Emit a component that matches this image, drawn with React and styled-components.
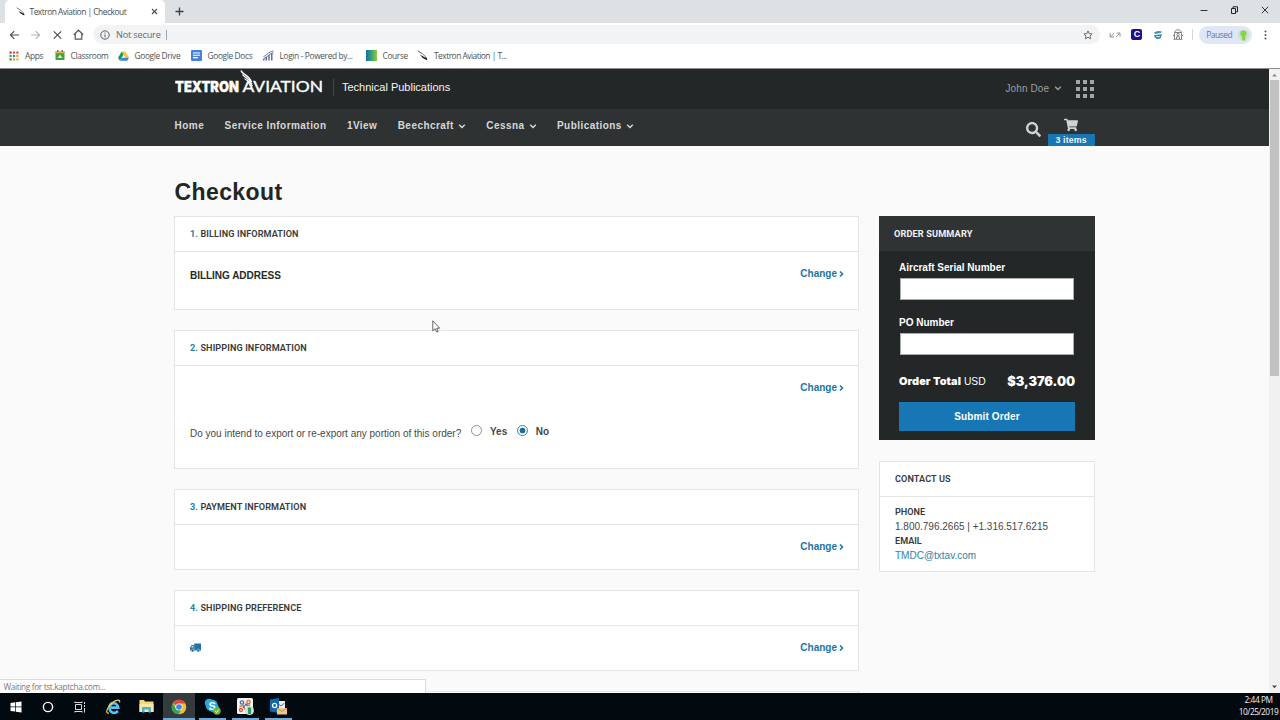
import React from "react";
import styled, { createGlobalStyle } from "styled-components";
import { FaSearch, FaShoppingCart } from "react-icons/fa";

const GlobalStyle = createGlobalStyle`
  * {
    box-sizing: border-box;
  }
  body {
    margin: 0;
    overflow: hidden;
  }
  svg {
    display: block;
    flex-shrink: 0;
  }
`;

const siteFont = `"Liberation Sans", Arial, sans-serif`;
const headingFont = `Roboto, "Liberation Sans", sans-serif`;
const uiFont = `"Open Sans", "Noto Sans", sans-serif`;

const Desktop = styled.div`
  position: relative;
  display: flex;
  flex-direction: column;
  width: 1280px;
  height: 720px;
  overflow: hidden;
  font-family: ${siteFont};
  background: #fafafa;
`;

/* ---------- browser ---------- */

const TabStrip = styled.div`
  display: flex;
  align-items: center;
  height: 23px;
  padding-left: 5px;
  background: #dee1e4;
  font-family: ${uiFont};
`;

const Tab = styled.div`
  display: flex;
  align-items: center;
  align-self: stretch;
  width: 160px;
  padding: 0 7px 0 11px;
  border-radius: 5px 5px 0 0;
  background: #fff;
`;

const TabTitle = styled.span`
  flex: 1;
  margin: -1px 0 0 4.5px;
  font-size: 8.4px;
  letter-spacing: -0.48px;
  white-space: nowrap;
  color: #4b4e51;
`;

const NewTab = styled.div`
  flex: 1;
  margin-left: 10px;
`;

const WindowButtons = styled.div`
  display: flex;
  align-items: center;
  gap: 22px;
  height: 19px;
  padding-right: 11px;
  align-self: flex-start;
`;

const Toolbar = styled.div`
  display: flex;
  align-items: center;
  height: 23px;
  padding: 0 9px;
  background: #fff;
  font-family: ${uiFont};
`;

const NavIcons = styled.div`
  display: flex;
  align-items: center;
  gap: 10.4px;
  width: 84px;
`;

const Omnibox = styled.div`
  display: flex;
  align-items: center;
  width: 1007px;
  height: 19px;
  padding: 0 7px;
  border-radius: 10px;
  background: #f1f3f4;
`;

const UrlText = styled.span`
  flex: 1;
  display: flex;
  align-items: center;
  gap: 5px;
  margin-left: 6px;
  font-size: 9.2px;
  letter-spacing: -0.2px;
  line-height: 12px;
  color: #66696c;
  &::after {
    content: "";
    width: 1px;
    height: 10px;
    background: #a5a8ab;
  }
`;

const Extensions = styled.div`
  display: flex;
  align-items: center;
  gap: 10.4px;
  margin-left: 9px;
`;

const CBadge = styled.span`
  width: 11px;
  height: 11px;
  border-radius: 2px;
  background: #21108c;
  color: #fff;
  font: bold 9px/11px ${siteFont};
  text-align: center;
`;

const Divider = styled.span`
  width: 1px;
  height: 11px;
  margin: 0 6px 0 9px;
  background: #d4d6d8;
`;

const Profile = styled.div`
  display: flex;
  align-items: center;
  justify-content: space-between;
  width: 53px;
  height: 18px;
  padding: 0 3px 0 7px;
  margin-right: 12px;
  border-radius: 9px;
  background: #dfe7f5;
  color: #5676c0;
  font-size: 8.4px;
  letter-spacing: -0.45px;
`;

const Bookmarks = styled.div`
  display: flex;
  align-items: center;
  height: 23px;
  padding: 0 0 3px 9px;
  border-bottom: 1px solid #8a8c8e;
  background: #fff;
  font-family: ${uiFont};
`;

const Bookmark = styled.div`
  display: flex;
  align-items: center;
  gap: 6px;
  width: ${(p) => p.$width}px;
  font-size: 8.4px;
  letter-spacing: ${(p) => p.$spacing || -0.37}px;
  white-space: nowrap;
  color: #505356;
`;

/* ---------- site ---------- */

const Viewport = styled.div`
  display: flex;
  height: 624px;
  overflow: hidden;
`;

const Site = styled.div`
  flex: 1;
  height: 624px;
  overflow: hidden;
`;

const Band = styled.div`
  height: ${(p) => p.$height}px;
  padding-left: 174.6px;
  background: ${(p) => p.$color};
`;

const BandInner = styled.div`
  display: flex;
  width: 920px;
  height: 100%;
`;

const Brand = styled.div`
  display: flex;
  flex: 1;
`;

const SiteName = styled.span`
  height: 17px;
  margin: 10px 0 0 9.4px;
  padding-left: 8px;
  border-left: 1px solid #44494a;
  font-size: 11px;
  line-height: 17px;
  color: #f4f5f5;
`;

const User = styled.div`
  display: flex;
  align-items: center;
  gap: 4.5px;
  height: 38px;
  margin-right: 14px;
  font-size: 10px;
  letter-spacing: 0.1px;
  color: #9b9fa0;
`;

const GridDots = styled.div`
  display: grid;
  grid-template-columns: repeat(3, 4px);
  grid-auto-rows: 4px;
  gap: 3px;
  align-self: center;
  margin-right: 1px;
  span {
    background: #a2a5a6;
  }
`;

const MainNav = styled.nav`
  display: flex;
  flex: 1;
  gap: 20.4px;
  font-size: 10px;
  font-weight: bold;
  letter-spacing: 0.45px;
  color: #d5d8d8;
`;

const NavItem = styled.span`
  display: flex;
  align-items: center;
  height: 33px;
  gap: 4px;
`;

const SearchButton = styled.div`
  margin: 12.5px 7px 0 0;
`;

const Cart = styled.div`
  display: flex;
  flex-direction: column;
  align-items: center;
  justify-content: flex-end;
  gap: 2px;
  width: 47px;
`;

const CartCount = styled.span`
  width: 100%;
  height: 12px;
  background: #1777b4;
  color: #e9f3f9;
  font-size: 8.8px;
  font-weight: bold;
  line-height: 12px;
  letter-spacing: 0.15px;
  text-align: center;
`;

const Content = styled.main`
  display: flex;
  gap: 20px;
  width: 921px;
  margin-left: 174px;
`;

const Title = styled.h1`
  height: 70px;
  margin: 0 0 0 174.5px;
  padding-top: 31px;
  font-size: 23px;
  line-height: 30px;
  letter-spacing: 0.4px;
  color: #202526;
`;

const Steps = styled.div`
  display: flex;
  flex-direction: column;
  gap: 20px;
  width: 685px;
`;

const Card = styled.section`
  height: ${(p) => p.$height}px;
  border: 1px solid #e4e5e5;
  background: #fff;
`;

const CardHeader = styled.h2`
  height: 35px;
  margin: 0;
  padding-left: 15px;
  border-bottom: 1px solid #e4e5e5;
  font-family: ${headingFont};
  font-size: 9.1px;
  font-weight: 600;
  line-height: 35px;
  letter-spacing: 0.1px;
  color: #35393a;
  b {
    font-weight: 700;
    color: #2780ac;
  }
`;

const CardBody = styled.div`
  display: flex;
  justify-content: space-between;
  padding: 14px 14px 0 15px;
`;

const Address = styled.h3`
  margin: 2px 0 0;
  font-size: 10px;
  line-height: 15px;
  letter-spacing: -0.03px;
  color: #25292a;
`;

const ChangeLink = styled.a`
  display: flex;
  align-items: center;
  gap: 2px;
  height: 15px;
  margin-left: auto;
  color: #1e74a6;
  font-size: 10px;
  font-weight: bold;
`;

const ExportRow = styled.div`
  display: flex;
  align-items: center;
  margin: 28px 0 0 15px;
  height: 16px;
  font-size: 10px;
  color: #46494a;
`;

const Question = styled.span`
  width: 281px;
  padding-top: 5px;
  white-space: nowrap;
`;

const Radio = styled.span`
  width: 11px;
  height: 11px;
  margin: 0 8px 2px 0;
  border: 1px solid ${(p) => (p.$checked ? "#2a86b8" : "#8d9091")};
  border-radius: 50%;
  background: ${(p) => (p.$checked ? "radial-gradient(#1b6c9c 0 2.6px, #fff 3.2px)" : "#fff")};
`;

const RadioLabel = styled.b`
  margin-right: 9.5px;
`;

const Sidebar = styled.aside`
  display: flex;
  flex-direction: column;
  gap: 21px;
  width: 216px;
`;

const Summary = styled.section`
  height: 224px;
  background: #232728;
  color: #fff;
`;

const SummaryHeader = styled.h2`
  height: 35px;
  margin: 0;
  padding-left: 15px;
  background: #2f3334;
  font-family: ${headingFont};
  font-size: 9.2px;
  font-weight: 700;
  line-height: 35px;
  letter-spacing: 0.12px;
  color: #f1f2f2;
`;

const Field = styled.label`
  display: block;
  height: 55px;
  padding: 9px 20px 0;
  font-size: 10px;
  font-weight: bold;
  line-height: 15px;
`;

const Input = styled.input`
  display: block;
  width: 174px;
  height: 22px;
  margin: 3px 0 0 1px;
  border: 1px solid #a9adae;
  background: #fff;
`;

const Total = styled.div`
  display: flex;
  align-items: center;
  justify-content: space-between;
  height: 20px;
  margin: 10px 20px 10.5px;
  font-size: 10.3px;
`;

const Heavy = styled.span`
  font-family: Inter, sans-serif;
  font-weight: 900;
  font-size: ${(p) => p.$size}px;
  letter-spacing: ${(p) => p.$spacing || 0}px;
`;

const Submit = styled.button`
  display: block;
  width: 176px;
  height: 29px;
  margin: 0 20px;
  padding: 0;
  border: 0;
  background: #1777b4;
  color: #fff;
  font: bold 10px ${siteFont};
  letter-spacing: 0.14px;
`;

const ContactBody = styled.div`
  padding: 7.8px 15px 0;
  font-size: 10px;
  line-height: 14.7px;
  color: #46494a;
  b {
    display: block;
    font-family: ${headingFont};
    font-size: 9.1px;
    font-weight: 600;
    color: #35393a;
  }
  a {
    color: #3081a9;
  }
`;

const Scrollbar = styled.div`
  display: flex;
  flex-direction: column;
  align-items: center;
  justify-content: space-between;
  width: 11px;
  padding: 4px 0;
  background: #f1f1f1;
`;

const Thumb = styled.span`
  width: 9px;
  height: 296px;
  margin: 3px 0 auto;
  background: #c1c1c1;
`;

const StatusBubble = styled.div`
  position: absolute;
  left: 0;
  top: 679px;
  width: 426px;
  height: 14px;
  padding-left: 3.5px;
  border: 1px solid #dcdddd;
  border-width: 1px 1px 0 0;
  background: #fff;
  color: #777a7c;
  font: 8.3px/13px ${uiFont};
  letter-spacing: -0.36px;
`;

const Pointer = styled.svg`
  position: absolute;
  left: 432px;
  top: 320px;
`;

/* ---------- taskbar ---------- */

const Taskbar = styled.div`
  display: flex;
  height: 27px;
  background: #030a0f;
  color: #eef0f1;
`;

const TaskItem = styled.div`
  display: flex;
  align-items: center;
  justify-content: center;
  width: ${(p) => p.$width}px;
  background: ${(p) => (p.$active ? "#343a3e" : "transparent")};
`;

const TaskSlot = styled.div`
  display: flex;
  align-items: center;
  justify-content: center;
  width: ${(p) => (p.$active ? 32 : 27)}px;
  height: 27px;
  border-top: 2px solid transparent;
  border-bottom: 2px solid ${(p) => (p.$open ? "#6fa9d6" : "transparent")};
`;

const Clock = styled.div`
  margin-left: auto;
  padding: 1px 1px 0 0;
  width: 42px;
  font: 8.3px/12px ${uiFont};
  letter-spacing: -0.45px;
  text-align: center;
  white-space: nowrap;
`;

const Chevron = ({ right }) => (
  <svg
    width={right ? 5 : 8}
    height="8"
    viewBox={right ? "0 0 5 8" : "0 0 8 8"}
    fill="none"
    stroke="currentColor"
    strokeWidth="1.5"
  >
    <path d={right ? "M1 1.4 3.5 4 1 6.6" : "M1.2 2.8 4 5.5 6.8 2.8"} />
  </svg>
);

const Truck = () => (
  <svg width="11" height="15" viewBox="0 0 11 15" fill="#1e74a6">
    <path d="M4.2 3.5H11v7H4.2zM0 10.5V7.4L1.8 5h2v5.500zM1.200 7.500h1.700V6H2.200z" fillRule="evenodd" />
    <circle cx="2.600" cy="10.600" r="1.500" stroke="#fff" strokeWidth=".4" />
    <circle cx="8.200" cy="10.600" r="1.500" stroke="#fff" strokeWidth=".4" />
  </svg>
);

const Logo = () => (
  <svg width="149" height="39" viewBox="0 0 149 39" fill="#fff">
    <text x="0" y="23" fontFamily="Inter, sans-serif" fontWeight="900" fontSize="14.6" textLength="64" lengthAdjust="spacingAndGlyphs" stroke="#fff" strokeWidth=".3">
      TEXTRON
    </text>
    <text x="67.5" y="23" fontFamily="Lato, sans-serif" fontSize="14.9" textLength="80.5" lengthAdjust="spacingAndGlyphs" stroke="#fff" strokeWidth=".35">
      AVIATION
    </text>
    <g fill="none" stroke="#fff" strokeWidth="1.5">
      <path d="M66 1.5C67 5.5 74 6 76.5 13" />
      <path d="M67.5 5.5C69 8.5 74.5 9 77 15" strokeWidth="1.3" />
      <path d="M69.5 9.5C71 11.5 75 11.5 77.5 17" strokeWidth="1.1" />
    </g>
  </svg>
);

const TabIcon = ({ size = 10 }) => (
  <svg width={size} height={size} viewBox="0 0 10 10">
    <path d="M2.5 4.2 9 7.2 9.3 9.4 5.5 7.6Z" fill="#16181a" />
    <path d="M.7.8 5 3.5 8.8 7.2" fill="none" stroke="#5d6062" strokeWidth=".9" />
    <path d="M2 3 7.6 6.7" stroke="#fff" strokeWidth=".7" />
  </svg>
);

const appDots = ["#cf3b33", "#dd5a48", "#c8534a", "#4c9b5c", "#4576c7", "#d9a73c", "#3d8d52", "#d8a131", "#d8b241"];

const bookmarks = [
  {
    label: "Apps",
    width: 45.5,
    icon: (
      <svg width="10" height="10" viewBox="0 0 10 10">
        {appDots.map((color, i) => (
          <rect key={i} x={0.5 + (i % 3) * 3.4} y={0.5 + Math.floor(i / 3) * 3.4} width="2.2" height="2.2" fill={color} />
        ))}
      </svg>
    ),
  },
  {
    label: "Classroom",
    width: 63,
    icon: (
      <svg width="10" height="11" viewBox="0 0 10 11">
        <path d="M.5 1.5h9V10h-9z" fill="#43a047" />
        <path d="M.5 1h9v2.2h-9z" fill="#e5b834" />
        <path d="M2 0h1.5v2H2zM6.5 0H8v2H6.5z" fill="#777" />
        <path d="M5 4.6 7.4 8H2.6z" fill="#d9f0da" />
      </svg>
    ),
  },
  {
    label: "Google Drive",
    width: 73,
    icon: (
      <svg width="11" height="10" viewBox="0 0 11 10">
        <path d="M3.7.5h3.6L11 6.7H7.4z" fill="#f6c62e" />
        <path d="M3.7.5 5.5 3.6 1.9 9.7 0 6.7z" fill="#189b63" />
        <path d="M3.8 6.7H11L9.2 9.7H1.9z" fill="#4280e4" />
      </svg>
    ),
  },
  {
    label: "Google Docs",
    width: 72,
    icon: (
      <svg width="11" height="11" viewBox="0 0 11 11">
        <rect width="11" height="11" rx="1" fill="#4a7fd6" />
        <path d="M2 3h7M2 5.3h7M2 7.6h5" stroke="#fff" strokeWidth="1.1" />
      </svg>
    ),
  },
  {
    label: "Login - Powered by...",
    width: 103,
    icon: (
      <svg width="11" height="11" viewBox="0 0 11 11" fill="none" stroke="#4c5b96" strokeWidth="1.3">
        <path d="M.8 10.5v-2M3.3 10.5V7M6 10.5V5.2M8.8 10.5v-7" />
        <path d="M.5 6.5C3.5 5.5 5 2 10.5 1M1 8.5C4.5 7 6 3.8 10.5 2.8" strokeWidth=".9" />
      </svg>
    ),
  },
  {
    label: "Course",
    width: 51.5,
    icon: (
      <svg width="11" height="11" viewBox="0 0 11 11">
        <defs>
          <linearGradient id="course">
            <stop stopColor="#176fa5" />
            <stop offset=".5" stopColor="#35a477" />
            <stop offset="1" stopColor="#99cc38" />
          </linearGradient>
        </defs>
        <rect width="11" height="11" fill="url(#course)" />
      </svg>
    ),
  },
  { label: "Textron Aviation | T...", width: 90, spacing: -0.5, icon: <TabIcon size={11} /> },
];

const navItems = [
  { label: "Home" },
  { label: "Service Information" },
  { label: "1View" },
  { label: "Beechcraft", menu: true },
  { label: "Cessna", menu: true },
  { label: "Publications", menu: true },
];

const Change = () => (
  <ChangeLink>
    Change <Chevron right />
  </ChangeLink>
);

const BrowserChrome = () => (
  <>
    <TabStrip>
      <Tab>
        <TabIcon size={9} />
        <TabTitle>Textron Aviation | Checkout</TabTitle>
        <svg width="7" height="7" viewBox="0 0 7 7" stroke="#4d5053" strokeWidth="1.1">
          <path d="m1 1 5 5M6 1 1 6" />
        </svg>
      </Tab>
      <NewTab>
        <svg width="9" height="9" viewBox="0 0 9 9" stroke="#3e4144" strokeWidth="1.3">
          <path d="M4.5.5v8M.5 4.5h8" />
        </svg>
      </NewTab>
      <WindowButtons>
        <svg width="8" height="8" viewBox="0 0 8 8" stroke="#333">
          <path d="M.5 4.5h7" />
        </svg>
        <svg width="9" height="8" viewBox="0 0 9 8" fill="none" stroke="#222">
          <path d="M1.5 2.5h4v5h-4zM3 2V.8h4.5v5H6" />
        </svg>
        <svg width="8" height="8" viewBox="0 0 8 8" stroke="#333">
          <path d="m.8.8 6.4 6.4M7.2.8.8 7.2" />
        </svg>
      </WindowButtons>
    </TabStrip>
    <Toolbar>
      <NavIcons>
        <svg width="11" height="10" viewBox="0 0 11 10" fill="none" stroke="#4d5053" strokeWidth="1.2">
          <path d="M10 5H1.5M5.2 1.2 1.4 5l3.8 3.8" />
        </svg>
        <svg width="11" height="10" viewBox="0 0 11 10" fill="none" stroke="#b4b6b8" strokeWidth="1.2">
          <path d="M1 5h8.5M5.8 1.2 9.6 5 5.8 8.8" />
        </svg>
        <svg width="11" height="10" viewBox="0 0 11 10" stroke="#4d5053" strokeWidth="1.2">
          <path d="m1.8 1.3 7.4 7.4M9.2 1.3 1.8 8.7" />
        </svg>
        <svg width="11" height="11" viewBox="0 0 11 11" fill="none" stroke="#55585b" strokeWidth="1.2">
          <path d="M.8 5.8 5.5 1.2l4.7 4.6M2.2 5v5.2h6.6V5" />
        </svg>
      </NavIcons>
      <Omnibox>
        <svg width="10" height="10" viewBox="0 0 10 10" fill="none" stroke="#5b5e61">
          <circle cx="5" cy="5" r="4.2" />
          <path d="M5 4.4v3M5 2.5v1" />
        </svg>
        <UrlText>Not secure</UrlText>
        <svg width="10" height="10" viewBox="0 0 10 10" fill="none" stroke="#5b5e61" strokeWidth=".9">
          <path d="m5 .9 1.2 2.7 2.9.3L7 5.9l.6 2.9L5 7.3 2.4 8.8 3 5.9.9 3.9l2.9-.3z" />
        </svg>
      </Omnibox>
      <Extensions>
        <svg width="12" height="8" viewBox="0 0 12 8" fill="none" stroke="#939699" strokeWidth="1">
          <path d="M1.2 2v4H5M1.2 6 5 2.5M7 6l4-4M7.500 2H11v3.800" />
        </svg>
        <CBadge>C</CBadge>
        <svg width="10" height="10" viewBox="0 0 10 10" fill="none">
          <path d="M1 2.500C3 .8 7 .5 9 1.500L8 3 2 4z" fill="#4396b1" />
          <path d="M1 5.200 9 4.200 7.500 8.500 4 9 1.500 7z" fill="#347f9d" />
          <path d="M3 6.600h4" stroke="#d7edf3" />
        </svg>
        <svg width="10" height="11" viewBox="0 0 10 11" fill="none" stroke="#7f8284">
          <path d="M1.500 10V4.500C1.500 2 3 .8 5 .8s3.500 1.200 3.500 3.700V10M.5 10.300h9M3.500 10V7.800h3V10M2 3.500h6M0 6.500h2M8 6.500h2" />
          <circle cx="5" cy="5.500" r="1.200" />
        </svg>
      </Extensions>
      <Divider />
      <Profile>
        Paused
        <svg width="11" height="12" viewBox="0 0 11 12">
          <circle cx="5.500" cy="6" r="5.500" fill="#d0dfd0" />
          <path d="M5.300 1.500c2.500 0 3.500 1.500 3.200 3.500L7.300 7.500v4H4V8L2.400 5.500C2 3 3 1.500 5.300 1.500z" fill="#84d642" />
        </svg>
      </Profile>
      <svg width="3" height="10" viewBox="0 0 3 10" fill="#4d5053">
        <circle cx="1.5" cy="1.4" r="1" />
        <circle cx="1.5" cy="5" r="1" />
        <circle cx="1.5" cy="8.6" r="1" />
      </svg>
    </Toolbar>
    <Bookmarks>
      {bookmarks.map((b) => (
        <Bookmark key={b.label} $width={b.width} $spacing={b.spacing}>
          {b.icon}
          {b.label}
        </Bookmark>
      ))}
    </Bookmarks>
  </>
);

const SiteHeader = () => (
  <header>
    <Band $height={40} $color="#232728">
      <BandInner>
        <Brand>
          <Logo />
          <SiteName>Technical Publications</SiteName>
        </Brand>
        <User>
          John Doe <Chevron />
        </User>
        <GridDots>
          {[...Array(9)].map((_, i) => (
            <span key={i} />
          ))}
        </GridDots>
      </BandInner>
    </Band>
    <Band $height={37} $color="#2f3233">
      <BandInner>
        <MainNav>
          {navItems.map((item) => (
            <NavItem key={item.label}>
              {item.label}
              {item.menu && <Chevron />}
            </NavItem>
          ))}
        </MainNav>
        <SearchButton>
          <FaSearch size={15} color="#d0d3d3" />
        </SearchButton>
        <Cart>
          <FaShoppingCart size={14} color="#d0d3d3" />
          <CartCount>3 items</CartCount>
        </Cart>
      </BandInner>
    </Band>
  </header>
);

const Step = ({ number, title, height, children }) => (
  <Card $height={height}>
    <CardHeader>
      <b>{number}.</b> {title}
    </CardHeader>
    {children}
  </Card>
);

const Checkout = () => (
  <Steps>
    <Step number={1} title="BILLING INFORMATION" height={94}>
      <CardBody>
        <Address>BILLING ADDRESS</Address>
        <Change />
      </CardBody>
    </Step>
    <Step number={2} title="SHIPPING INFORMATION" height={139}>
      <CardBody>
        <Change />
      </CardBody>
      <ExportRow>
        <Question>Do you intend to export or re-export any portion of this order?</Question>
        <Radio />
        <RadioLabel>Yes</RadioLabel>
        <Radio $checked />
        <RadioLabel>No</RadioLabel>
      </ExportRow>
    </Step>
    <Step number={3} title="PAYMENT INFORMATION" height={81}>
      <CardBody>
        <Change />
      </CardBody>
    </Step>
    <Step number={4} title="SHIPPING PREFERENCE" height={81}>
      <CardBody>
        <Truck />
        <Change />
      </CardBody>
    </Step>
    <Card $height={80} />
  </Steps>
);

const OrderSummary = () => (
  <Summary>
    <SummaryHeader>ORDER SUMMARY</SummaryHeader>
    <Field>
      Aircraft Serial Number
      <Input />
    </Field>
    <Field>
      PO Number
      <Input />
    </Field>
    <Total>
      <span>
        <Heavy $size={10.9} $spacing={0.1}>Order Total</Heavy> USD
      </span>
      <Heavy $size={12.8} $spacing={-0.05}>$3,376.00</Heavy>
    </Total>
    <Submit>Submit Order</Submit>
  </Summary>
);

const Contact = () => (
  <Card $height={111}>
    <CardHeader>CONTACT US</CardHeader>
    <ContactBody>
      <b>PHONE</b>
      <div>1.800.796.2665 | +1.316.517.6215</div>
      <b>EMAIL</b>
      <a>TMDC@txtav.com</a>
    </ContactBody>
  </Card>
);

const tasks = [
  {
    width: 32,
    icon: (
      <svg width="12" height="12" viewBox="0 0 12 12" fill="#fff">
        <path d="M.5 2 5.2 1.3v4.3H.5zM5.9 1.2 11.5.4v5.2H5.9zM.5 6.3h4.7v4.3L.5 10zM5.9 6.3h5.6v5.2l-5.6-.8z" />
      </svg>
    ),
  },
  {
    width: 32,
    icon: (
      <svg width="12" height="12" viewBox="0 0 12 12" fill="none" stroke="#fff" strokeWidth="1.4">
        <circle cx="6" cy="6" r="4.6" />
      </svg>
    ),
  },
  {
    width: 32,
    icon: (
      <svg width="12" height="12" viewBox="0 0 12 12" fill="none" stroke="#d8dadb">
        <path d="M1.5 3.5h6v5h-6zM1 2V.5M8 2V.5M1 1.5h7M1 10.5h7M1 10v1.5M8 10v1.5M10.5 1v2M10.5 4v2M10.5 7v4.5" />
      </svg>
    ),
  },
  {
    width: 34,
    icon: (
      <svg width="15" height="16" viewBox="0 0 15 16" fill="none">
        <path d="M12 12C8 16 3 13 3.6 8 4.2 3 11 2.6 12.2 8.600H5" stroke="#54c4ee" strokeWidth="2.6" />
        <path d="M3 14C-1 15 .6 8.500 6 4S14.500 1 13.500 3.500" stroke="#f3cd4b" strokeWidth="1.2" />
      </svg>
    ),
  },
  {
    width: 33,
    icon: (
      <svg width="15" height="13" viewBox="0 0 15 13">
        <path d="M.5 0H5l1 1.5h8.500V12H.5z" fill="#f5d679" />
        <path d="M.5 4h14v8H.5z" fill="#f9e7a4" />
        <path d="M3 12.500V7h9v5.500H9.500v-3h-4v3z" fill="#4bb2d6" />
      </svg>
    ),
  },
  {
    width: 32,
    active: true,
    open: true,
    icon: (
      <svg width="16" height="16" viewBox="0 0 16 16">
        <circle cx="8" cy="8" r="7.3" fill="#f1bf2b" />
        <path d="M8 8 1.7 4.3A7.3 7.3 0 0 1 14.4 4.5H8z" fill="#df4a3c" />
        <path d="M1.7 4.3A7.3 7.3 0 0 0 7.5 15.3L10.8 9.5H5z" fill="#33a35b" />
        <circle cx="8" cy="8" r="3.6" fill="#f3f5f4" />
        <circle cx="8" cy="8" r="2.8" fill="#4a83df" />
      </svg>
    ),
  },
  {
    width: 34,
    open: true,
    icon: (
      <svg width="17" height="17" viewBox="0 0 17 17">
        <g fill="#27a8de">
          <circle cx="5" cy="5" r="4.2" />
          <circle cx="10.5" cy="10" r="4.5" />
          <circle cx="7.8" cy="7.5" r="6" />
        </g>
        <text x="4.5" y="11.5" fontFamily="Liberation Sans" fontWeight="bold" fontSize="11" fill="#fff">
          S
        </text>
        <circle cx="13" cy="13" r="3.7" fill="#71b62c" />
        <path d="m11.2 13 1.4 1.4 2.3-2.7" fill="none" stroke="#fff" />
      </svg>
    ),
  },
  {
    width: 33,
    open: true,
    icon: (
      <svg width="17" height="17" viewBox="0 0 17 17" fill="none">
        <rect width="16" height="16" rx="1.5" fill="#f2f3f3" />
        <circle cx="5" cy="4.5" r="1.7" stroke="#4b6eb4" strokeWidth="1.3" />
        <circle cx="11.5" cy="4" r="1.7" stroke="#e56f2f" strokeWidth="1.3" />
        <circle cx="4" cy="12" r="1.5" stroke="#d7563c" strokeWidth="1.3" />
        <path d="m2.5 8.5 4-1 1.5 4M9 7.5l4-.5" stroke="#e5832f" strokeWidth="1.5" />
        <path d="m6 10 3-4 2 2" stroke="#4b6eb4" strokeWidth="1.2" />
        <circle cx="12.5" cy="12.5" r="4.5" fill="#c8e4d4" />
        <circle cx="12.5" cy="11" r="1.8" fill="#3b9161" />
        <path d="M11 12h3v4h-3z" fill="#3b9161" />
      </svg>
    ),
  },
  {
    width: 33,
    open: true,
    icon: (
      <svg width="17" height="17" viewBox="0 0 17 17">
        <path d="M8 3h7v9H8z" fill="#e9f1f7" />
        <path d="m9 6.5 2 1.5 3.500-3" fill="none" stroke="#2873b1" />
        <path d="M0 1.5 9 0v15L0 13.5z" fill="#0b69b3" />
        <circle cx="4.6" cy="7.5" r="2.1" fill="none" stroke="#fff" strokeWidth="1.3" />
        <path d="M7 10h10v6.500H7z" fill="#edc58d" />
        <path d="m7 10 5 3.500 5-3.500" fill="none" stroke="#b98042" strokeWidth=".8" />
      </svg>
    ),
  },
];

const App = () => {
  return (
    <Desktop>
      <GlobalStyle />
      <BrowserChrome />
      <Viewport>
        <Site>
          <SiteHeader />
          <Title>Checkout</Title>
          <Content>
            <Checkout />
            <Sidebar>
              <OrderSummary />
              <Contact />
            </Sidebar>
          </Content>
        </Site>
        <Scrollbar>
          <svg width="5" height="4" viewBox="0 0 5 4" fill="#8c8c8c">
            <path d="M0 3.5 2.5.8 5 3.5z" />
          </svg>
          <Thumb />
          <svg width="5" height="4" viewBox="0 0 5 4" fill="#4c4c4c">
            <path d="M0 .5 2.5 3.2 5 .5z" />
          </svg>
        </Scrollbar>
      </Viewport>
      <Taskbar>
        {tasks.map((task, i) => (
          <TaskItem key={i} $width={task.width} $active={task.active}>
            <TaskSlot $active={task.active} $open={task.open}>
              {task.icon}
            </TaskSlot>
          </TaskItem>
        ))}
        <Clock>
          2:44 PM
          <br />
          10/25/2019
        </Clock>
      </Taskbar>
      <StatusBubble>Waiting for tst.kaptcha.com...</StatusBubble>
      <Pointer width="9" height="13" viewBox="0 0 9 13" fill="#fff" stroke="#3c3f40" strokeWidth=".8">
        <path d="M.8.8v10l2.400-2.100 1.500 3.400 1.500-.7-1.500-3.200h3z" />
      </Pointer>
    </Desktop>
  );
};

export default App;
